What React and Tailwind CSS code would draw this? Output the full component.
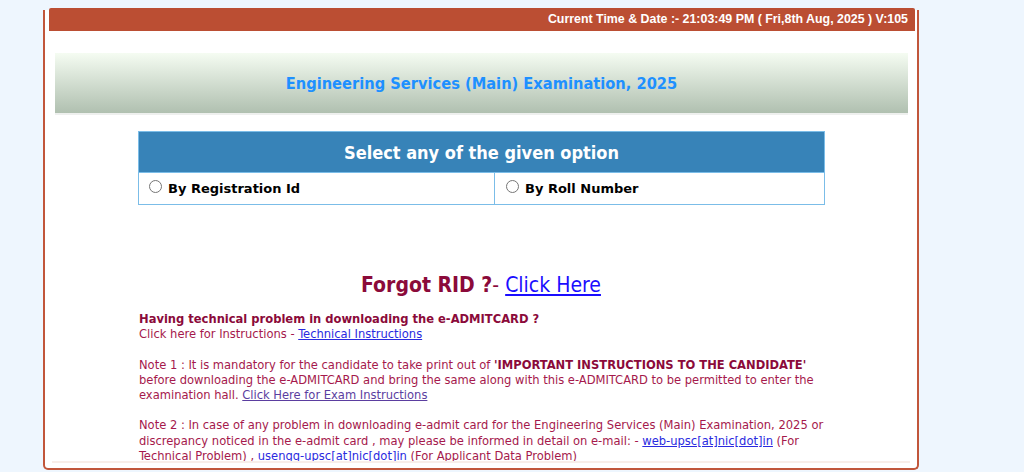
export default function App() {
  const font = { fontFamily: '"DejaVu Sans Condensed", "DejaVu Sans", Tahoma, sans-serif' };
  return (
    <div className="min-h-[472px] w-full bg-[#eef6fe] overflow-hidden pt-[10px]" style={font}>
      <div className="ml-[43px] w-[876px] h-[460px] border-x-2 border-b-2 border-[#c1563b] rounded-b-[5px] bg-white flex flex-col">
        <div className="shrink-0 -mt-[2px] ml-[4px] mr-[2px] h-[23px] bg-[#bb4e33] rounded-t-[2px] flex items-center justify-end pr-[7px]">
          <span className="text-white font-bold text-[12.4px]" style={{ fontFamily: '"Liberation Sans", Arial, sans-serif' }}>
            Current Time &amp; Date :- 21:03:49 PM ( Fri,8th Aug, 2025 ) V:105
          </span>
        </div>
        <div className="shrink-0 mt-[22px] ml-[10px] mr-[9px] h-[60px] bg-gradient-to-b from-[#f5fcf2] to-[#b0c0b0] flex items-center justify-center">
          <span className="text-[#1e90ff] font-bold text-[16.3px] pt-[3px]">Engineering Services (Main) Examination, 2025</span>
        </div>
        <div className="shrink-0 ml-[10px] mr-[9px] h-[2px] bg-[#eef0ee]"></div>
        <div className="shrink-0 mt-[16px] ml-[93px] w-[687px] border border-[#7bbde8]">
          <div className="h-[40px] bg-[#3783b8] flex items-center justify-center">
            <span className="text-white font-bold text-[18px]">Select any of the given option</span>
          </div>
          <div className="h-[32px] flex border-t border-[#7bbde8]" style={{ fontFamily: '"DejaVu Sans", Verdana, sans-serif' }}>
            <label className="w-[356px] border-r border-[#7bbde8] flex items-center pl-[10px] text-[13px] font-bold text-black">
              <input type="radio" name="opt" className="w-[13px] h-[13px] mr-[6px] -mt-[4px]" />
              By Registration Id
            </label>
            <label className="flex-1 flex items-center pl-[11px] text-[13px] font-bold text-black">
              <input type="radio" name="opt" className="w-[13px] h-[13px] mr-[6px] -mt-[4px]" />
              By Roll Number
            </label>
          </div>
        </div>
        <div className="shrink-0 mt-[67px] text-center text-[21px] leading-[26px] text-[#8b0a3a]">
          <span className="font-bold">Forgot RID ?</span>- <a href="#" className="text-[#1a0dff] underline">Click Here</a>
        </div>
        <div className="shrink-0 mt-[13px] ml-[94px] w-[695px] h-[150px] text-[12.8px] leading-[15.2px] text-[#a5194c]">
          <div className="font-bold text-[#8b0a3a]">Having technical problem in downloading the e-ADMITCARD ?</div>
          <div>Click here for Instructions - <a href="#" className="text-[#2a2ae0] underline">Technical Instructions</a></div>
          <p className="mt-[15.2px]">
            Note 1 : It is mandatory for the candidate to take print out of <span className="font-bold text-[#8b0a3a]">'IMPORTANT INSTRUCTIONS TO THE CANDIDATE'</span> before downloading the e-ADMITCARD and bring the same along with this e-ADMITCARD to be permitted to enter the examination hall. <a href="#" className="text-[#5b3ea0] underline">Click Here for Exam Instructions</a>
          </p>
          <p className="mt-[15.2px]">
            Note 2 : In case of any problem in downloading e-admit card for the Engineering Services (Main) Examination, 2025 or discrepancy noticed in the e-admit card , may please be informed in detail on e-mail: - <a href="#" className="text-[#2a2ae0] underline">web-upsc[at]nic[dot]in</a> (For Technical Problem) , <a href="#" className="text-[#2a2ae0] underline">usengg-upsc[at]nic[dot]in</a> (For Applicant Data Problem)
          </p>
        </div>
        <div className="shrink-0 mx-[7px] h-[2px] bg-[#f8eee9]"></div>
      </div>
    </div>
  );
}
